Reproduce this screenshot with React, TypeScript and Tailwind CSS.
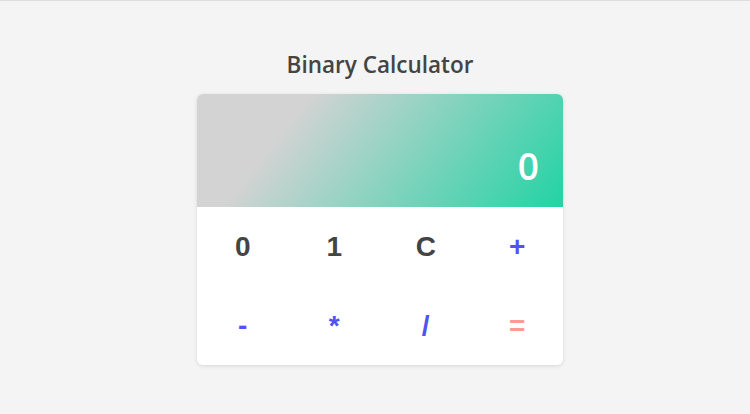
import React from 'react';

const keys: { label: string; tone: 'dark' | 'op' | 'eq' }[] = [
  { label: '0', tone: 'dark' },
  { label: '1', tone: 'dark' },
  { label: 'C', tone: 'dark' },
  { label: '+', tone: 'op' },
  { label: '-', tone: 'op' },
  { label: '*', tone: 'op' },
  { label: '/', tone: 'op' },
  { label: '=', tone: 'eq' },
];

const toneClass = {
  dark: 'text-[#444444]',
  op: 'text-[#5252f2]',
  eq: 'text-[#ff9a93]',
};

export default function App() {
  return (
    <div className="min-h-screen w-full bg-[#f4f4f4] border-t border-[#dddddd] flex flex-col items-center pl-[10px]">
      <h1 className="mt-[48px] text-[22.5px] leading-[32px] font-semibold text-[#444444] font-['Open_Sans',sans-serif]">
        Binary Calculator
      </h1>

      <div className="mt-[13px] w-[366px] rounded-md bg-white shadow-[0_1px_4px_rgba(0,0,0,0.12)] overflow-hidden">
        {/* Display */}
        <div className="h-[113px] flex items-end justify-end pr-[24px] pb-[23px] bg-[linear-gradient(128deg,#d3d3d3_25%,#22d3a4_100%)]">
          <span className="text-white text-[37px] leading-none font-semibold font-['Open_Sans',sans-serif]">
            0
          </span>
        </div>

        {/* Keys */}
        <div className="grid grid-cols-4">
          {keys.map((k) => (
            <button
              key={k.label}
              className={`h-[79px] flex items-center justify-center text-[28px] font-bold font-['Liberation_Sans',Arial,sans-serif] ${toneClass[k.tone]}`}
            >
              {k.label}
            </button>
          ))}
        </div>
      </div>
    </div>
  );
}
